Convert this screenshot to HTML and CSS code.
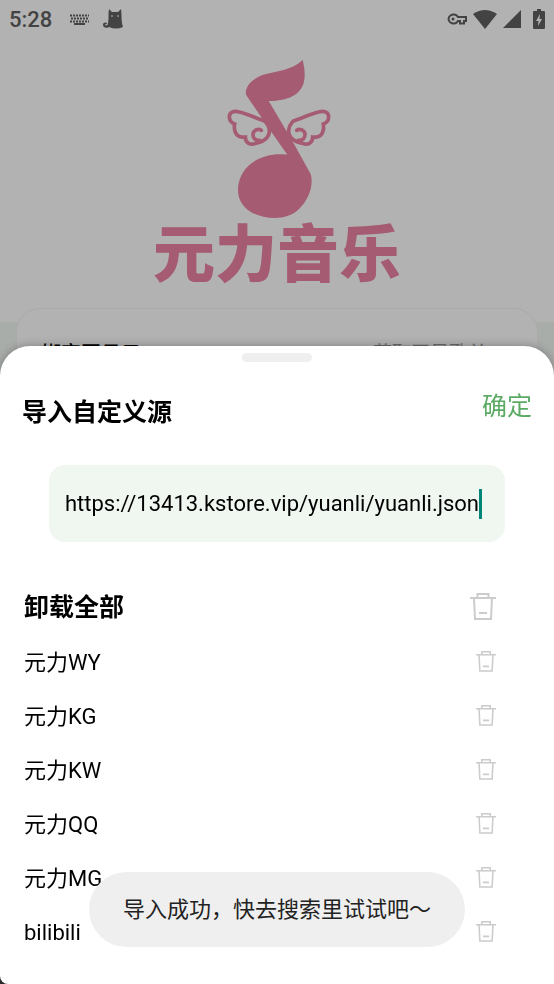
FILE: index.html
```html
<!DOCTYPE html>
<html lang="zh-CN">
	<head>
		<meta charset="utf-8">
		<meta name="viewport" content="width=device-width, initial-scale=1">
		<title>元力音乐</title>
		<link rel="stylesheet" href="styles.css">
	</head>
	<body>
		<svg class="defs">
			<symbol id="trash" viewBox="0 0 26 28">
				<path d="M0 6H26M7.500 6V2H18.500V6M4 6L5 27H21L22 6M9 21H17"/>
			</symbol>
		</svg>
		<div class="page">
			<header class="status">
				<span class="time">5:28</span>
				<svg class="keyboard" viewBox="0 0 19 11" width="19" height="11"><path stroke-dasharray="2 1" d="M0 1.500H19M1 4.500H19M0 7.500H19"/><path d="M4 10H15"/></svg>
				<svg class="cat" viewBox="0 0 22 20" width="22" height="20"><path d="M6 0L9 3H15L18 0C19 7 18 12 20 18Q13 21 6 18C3 20 0 18 0 16C0 13 4 13 4 15L2 15.500C2 17 5 17 5 14C6 9 5 5 6 0Z"/><path class="eyes" d="M8 7H10M14 7H16"/></svg>
				<span class="right">
					<svg viewBox="0 0 20 12" width="20" height="12"><path class="key" d="M11 4A5 4.500 0 1 0 11 8H13V10.500H17V8H19V4Z"/><circle cx="6" cy="6" r="1.500"/></svg>
					<svg viewBox="0 0 24 19" width="24" height="19"><path d="M0 4Q12 -4 24 4L12 19Z"/></svg>
					<svg viewBox="0 0 18 18" width="18" height="18"><path d="M18 0V18H0Z"/></svg>
					<svg class="battery" viewBox="0 0 12 20" width="12" height="20"><path d="M4 0H8V2H11Q12 2 12 3V19Q12 20 11 20H1Q0 20 0 19V3Q0 2 1 2H4Z"/><path class="bolt" d="M7 5L3 12H5.500L5 17L9 10H6.500Z"/></svg>
				</span>
			</header>
			<div class="brand">
				<svg viewBox="-9 0 420 480" width="140" height="160">
					<path d="M278 0C284 25 286 45 282 65C272 105 235 122 176 123L245 239L302 342C312 375 296 420 268 446C240 474 200 478 160 470C115 460 82 432 84 385C88 320 150 275 232 284L180 210L108 104C104 80 125 58 155 46C200 32 245 32 278 0Z"/>
					<g id="wing" class="wing">
						<path d="M164 183C138 174 112 162 88 156C70 151 58 157 58 170C58 181 66 189 74 192C70 212 79 228 90 230Q98 232 106 231C106 250 122 256 136 250C158 248 178 233 178 214C178 204 173 192 164 183"/>
						<path d="M154 211C147 205 131 208 129 222C128 234 137 243 149 241"/>
					</g>
					<use href="#wing" transform="matrix(-1 0 0 1 414 0)"/>
				</svg>
				<h1>元力音乐</h1>
			</div>
			<main class="back">
				<div class="card"><b>绑定网易云</b><span>获取网易歌单</span></div>
			</main>
		</div>
		<div class="scrim"></div>

		<section class="sheet">
			<div class="grip"></div>
			<form>
				<div class="head">
					<h2>导入自定义源</h2>
					<button type="button" class="ok">确定</button>
				</div>
				<label class="url">
					<input type="text" aria-label="源地址" size="38" value="https://13413.kstore.vip/yuanli/yuanli.json">
					<span class="caret"></span>
				</label>
			</form>
			<div class="row all"><h2>卸载全部</h2><button aria-label="卸载全部"><svg><use href="#trash"/></svg></button></div>
			<ul>
				<li class="row">元力WY<button aria-label="卸载元力WY"><svg><use href="#trash"/></svg></button></li>
				<li class="row">元力KG<button aria-label="卸载元力KG"><svg><use href="#trash"/></svg></button></li>
				<li class="row">元力KW<button aria-label="卸载元力KW"><svg><use href="#trash"/></svg></button></li>
				<li class="row">元力QQ<button aria-label="卸载元力QQ"><svg><use href="#trash"/></svg></button></li>
				<li class="row">元力MG<button aria-label="卸载元力MG"><svg><use href="#trash"/></svg></button></li>
				<li class="row">bilibili<button aria-label="卸载bilibili"><svg><use href="#trash"/></svg></button></li>
			</ul>
		</section>
		<div class="toast" role="status">导入成功，快去搜索里试试吧～</div>
	</body>
</html>
```
FILE: styles.css
```css
* { box-sizing: border-box }
body {
	margin: 0;
	min-height: 100vh;
	background: #444;
	color: #000;
	font-family: Roboto, "Noto Sans CJK SC", sans-serif;
	font-size: 22px;
	overflow: hidden;
}
h1, h2, ul { margin: 0; padding: 0 }
h2 {
	font-size: 25px;
	font-weight: 700;
	line-height: 40px;
}
button {
	border: none;
	padding: 0;
	background: none;
	font: inherit;
	cursor: pointer;
}
svg { display: block }
.defs {
	position: absolute;
	width: 0;
	height: 0;
}

/* page under the sheet */
.page { background: #fff }
.status {
	display: flex;
	align-items: center;
	height: 38px;
	padding: 0 9px;
	color: #616161;
	fill: #616161;
}
.time { font-weight: 500 }
.keyboard {
	margin-left: 18px;
	stroke: #616161;
	stroke-width: 2;
}
.cat { margin-left: 14px }
.eyes { stroke: #fff }
.right {
	display: flex;
	align-items: center;
	gap: 6px;
	margin-left: auto;
}
.key {
	fill: none;
	stroke: #616161;
	stroke-width: 2;
}
.battery { margin-left: 6px }
.bolt { fill: #fff }
.brand {
	display: flex;
	flex-direction: column;
	align-items: center;
	padding-top: 22px;
	color: #ed83a4;
	fill: #ed83a4;
}
.wing {
	fill: none;
	stroke: #ed83a4;
	stroke-width: 11;
	stroke-linecap: round;
}
.brand h1 {
	font-family: "Noto Sans CJK SC", sans-serif;
	font-size: 62px;
	font-weight: 900;
	line-height: 60px;
}
.back {
	margin-top: 28px;
	padding: 0 16px;
	background: linear-gradient(#fff 14px, #f3f8f4 14px);
}
.card {
	display: flex;
	justify-content: space-between;
	height: 320px;
	padding: 31px 50px 0 24px;
	border: 1px solid #f4f4f4;
	border-radius: 24px;
	background: #fff;
	font-size: 20px;
	line-height: 28px;
}
.card b { font-weight: 500 }
.card span {
	color: #999;
	font-size: 19px;
}
.scrim {
	position: fixed;
	inset: 0;
	background: rgba(0,0,0,.3);
}

.sheet {
	position: fixed;
	left: 0;
	right: 0;
	bottom: 0;
	padding: 7px 24px 24px;
	border-radius: 30px 30px 0 8px;
	background: #fff;
	box-shadow: 0 0 10px rgba(0,0,0,.3);
}
.grip {
	width: 70px;
	height: 9px;
	margin: 0 auto;
	border-radius: 5px;
	background: #efefef;
}
.head {
	display: flex;
	justify-content: space-between;
	margin: 0 -2px;
	padding-top: 31px;
}
.ok {
	height: 26px;
	color: #5cab65;
	font-size: 25px;
	line-height: 28px;
}
.url {
	display: flex;
	align-items: center;
	height: 77px;
	margin: 32px 25px 0;
	padding: 0 16px;
	border-radius: 16px;
	background: #f0f7f0;
}
.url input {
	field-sizing: content;
	min-width: 0;
	border: none;
	padding: 0;
	outline: none;
	background: none;
	font: inherit;
}
.caret {
	width: 3px;
	height: 30px;
	background: #008577;
}
.row {
	display: flex;
	align-items: center;
	justify-content: space-between;
	height: 54px;
	padding-right: 34px;
	line-height: 54px;
}
.all {
	height: 56px;
	margin-top: 38px;
}
.row svg {
	width: 20px;
	height: 24px;
	margin-bottom: 4px;
	fill: none;
	stroke: #ccc;
	stroke-width: 2;
}
.all svg {
	width: 26px;
	height: 28px;
}
.toast {
	position: fixed;
	left: 50%;
	bottom: 37px;
	transform: translateX(-50%);
	padding: 0 34px;
	border-radius: 38px;
	background: #efefef;
	color: #222;
	line-height: 75px;
	white-space: nowrap;
}
```
